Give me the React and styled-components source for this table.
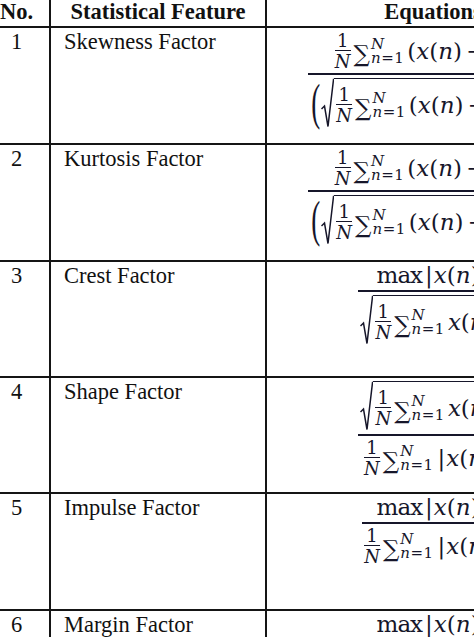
import React from 'react'
import styled, { createGlobalStyle } from 'styled-components'

const GlobalStyle = createGlobalStyle`
  html, body {
    margin: 0;
    padding: 0;
    background: #fff;
  }
  body {
    width: 474px;
    height: 637px;
    overflow: hidden;
  }
`

const Page = styled.div`
  width: 474px;
  height: 637px;
  overflow: hidden;
  background: #fff;
  color: #111;
`

const Table = styled.div`
  margin-left: -16px;
  width: 640px;
`

const Row = styled.div`
  display: grid;
  grid-template-columns: 67px 216px 332px;
  height: ${p => p.$h}px;
  box-sizing: border-box;
  border-bottom: 2px solid #151515;
`

const Cell = styled.div`
  box-sizing: border-box;
  border-right: ${p => (p.$last ? 'none' : '2px solid #151515')};
  padding: ${p => (p.$head ? 0 : 2)}px 0 0 ${p => p.$indent || 0}px;
  text-align: ${p => p.$align || 'left'};
  font-family: "Liberation Serif", "Times New Roman", serif;
  font-size: 22.5px;
  font-weight: ${p => (p.$head ? 700 : 400)};
  line-height: 24px;
  white-space: nowrap;
`

const EqCell = styled.div`
  display: flex;
  justify-content: center;
  align-items: flex-start;
  padding-top: ${p => p.$top}px;
  padding-right: ${p => p.$shift || 0}px;
`

/* ---- math bits ---- */

const MathLine = styled.span`
  display: inline-flex;
  align-items: center;
  font-family: "DejaVu Serif", serif;
  font-size: 23px;
  line-height: 1;
  color: #16162a;
  white-space: nowrap;
`

const I = styled.i`
  font-style: italic;
`

const Op = styled.span`
  margin: 0 4px;
`

const Bar = styled.i`
  font-style: italic;
  text-decoration: overline;
`

const Sup = styled.span`
  font-size: 14px;
  align-self: flex-start;
  margin-top: ${p => p.$up || 0}px;
  margin-left: 1px;
`

const Max = styled.span`
  letter-spacing: -1px;
  margin-right: 2px;
`

const Abs = styled.span`
  margin: 0 1px;
`

const FracBox = styled.span`
  display: inline-flex;
  flex-direction: column;
  align-items: center;
`

const FracPart = styled.span`
  display: flex;
  align-items: center;
  justify-content: center;
  padding: ${p => p.$pad || '0 2px'};
`

const FracRule = styled.span`
  align-self: stretch;
  height: 0;
  border-top: 2px solid currentColor;
`

const SmallBox = styled.span`
  display: inline-flex;
  flex-direction: column;
  align-items: center;
  font-size: 18px;
  line-height: 17px;
  margin-right: 3px;
`

const SmallRule = styled.span`
  align-self: stretch;
  border-top: 1.2px solid currentColor;
  margin: 1px 0 2px;
`

const Sigma = styled.span`
  font-size: 23px;
  margin-top: 6px;
`

const Scripts = styled.span`
  display: inline-flex;
  flex-direction: column;
  font-size: 15px;
  line-height: 14px;
  letter-spacing: 0.5px;
  margin: 0 3px 0 1px;
`

const SqrtBox = styled.span`
  display: inline-flex;
  align-items: stretch;
`

const RadicalSvg = styled.svg`
  width: 13px;
  flex: 0 0 13px;
  align-self: stretch;
  height: auto;
`

const Radicand = styled.span`
  display: inline-flex;
  align-items: center;
  border-top: 1.6px solid currentColor;
  padding: 3px 2px 0 2px;
`

const BigParen = styled.span`
  display: inline-block;
  font-family: "Liberation Serif", serif;
  font-size: 27px;
  line-height: 27px;
  transform: scaleY(1.85);
  margin: 0 1px;
`

const OneOverN = () => (
  <SmallBox>
    <span>1</span>
    <SmallRule />
    <I>N</I>
  </SmallBox>
)

const Sum = () => (
  <>
    <Sigma>∑</Sigma>
    <Scripts>
      <I>N</I>
      <span>
        <I>n</I>=1
      </span>
    </Scripts>
  </>
)

const Sqrt = ({ children }) => (
  <SqrtBox>
    <RadicalSvg viewBox="0 0 13 50" preserveAspectRatio="none">
      <path
        d="M0.5 31 L3.5 28 L7 48.5 L12.6 0.8"
        fill="none"
        stroke="currentColor"
        strokeWidth="1.5"
        vectorEffect="non-scaling-stroke"
      />
    </RadicalSvg>
    <Radicand>{children}</Radicand>
  </SqrtBox>
)

const Frac = ({ num, den, gap = 3 }) => (
  <FracBox>
    <FracPart $pad={`0 2px ${gap}px`}>{num}</FracPart>
    <FracRule />
    <FracPart $pad={`${gap}px 2px 0`}>{den}</FracPart>
  </FracBox>
)

const XofN = () => (
  <>
    <I>x</I>(<I>n</I>)
  </>
)

const CentralMoment = ({ p }) => (
  <>
    <OneOverN />
    <Sum />
    (<XofN />
    <Op>−</Op>
    <Bar>x</Bar>)
    {p && <Sup $up={2}>{p}</Sup>}
  </>
)

const MaxAbs = () => (
  <>
    <Max>max</Max>
    <Abs>|</Abs>
    <XofN />
    <Abs>|</Abs>
  </>
)

const Rms = () => (
  <Sqrt>
    <OneOverN />
    <Sum />
    <XofN />
    <Sup $up={4}>2</Sup>
  </Sqrt>
)

const MeanAbs = () => (
  <>
    <OneOverN />
    <Sum />
    <Abs>|</Abs>
    <XofN />
    <Abs>|</Abs>
  </>
)

const moment = p => (
  <MathLine>
    <Frac
      num={<CentralMoment p={p} />}
      den={
        <>
          <BigParen>(</BigParen>
          <Sqrt>
            <CentralMoment p="2" />
          </Sqrt>
          <BigParen>)</BigParen>
          <Sup>{p}</Sup>
        </>
      }
    />
  </MathLine>
)

const rows = [
  { no: '1', name: 'Skewness Factor', top: 4, shift: 10, eq: moment('3') },
  { no: '2', name: 'Kurtosis Factor', top: 4, shift: 10, eq: moment('4') },
  {
    no: '3',
    name: 'Crest Factor',
    top: 2,
    eq: (
      <MathLine>
        <Frac num={<MaxAbs />} den={<Rms />} />
      </MathLine>
    ),
  },
  {
    no: '4',
    name: 'Shape Factor',
    top: 3,
    eq: (
      <MathLine>
        <Frac num={<Rms />} den={<MeanAbs />} />
      </MathLine>
    ),
  },
  {
    no: '5',
    name: 'Impulse Factor',
    top: 2,
    eq: (
      <MathLine>
        <Frac num={<MaxAbs />} den={<MeanAbs />} />
      </MathLine>
    ),
  },
  {
    no: '6',
    name: 'Margin Factor',
    top: 2,
    eq: (
      <MathLine>
        <Frac
          num={<MaxAbs />}
          den={
            <>
              <BigParen>(</BigParen>
              <OneOverN />
              <Sum />
              <Sqrt>
                <Abs>|</Abs>
                <XofN />
                <Abs>|</Abs>
              </Sqrt>
              <BigParen>)</BigParen>
              <Sup>2</Sup>
            </>
          }
        />
      </MathLine>
    ),
  },
]

const heights = [117, 117, 116, 116, 117, 117]

export default function App() {
  return (
    <Page>
      <GlobalStyle />
      <Table>
        <Row $h={28}>
          <Cell $head $align="center">No.</Cell>
          <Cell $head $align="center">Statistical Feature</Cell>
          <Cell $head $last $align="center">Equations</Cell>
        </Row>
        {rows.map((r, i) => (
          <Row key={r.no} $h={heights[i]}>
            <Cell $align="center">{r.no}</Cell>
            <Cell $indent={13}>{r.name}</Cell>
            <EqCell $top={r.top} $shift={r.shift}>{r.eq}</EqCell>
          </Row>
        ))}
      </Table>
    </Page>
  )
}
